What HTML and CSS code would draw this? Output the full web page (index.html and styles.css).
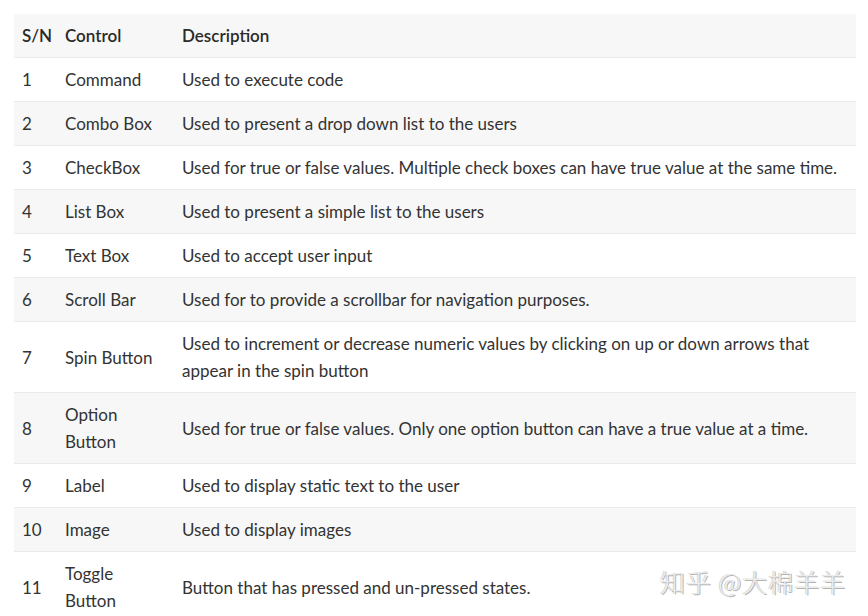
FILE: index.html
```html
<!DOCTYPE html>
<html>
<head>
<meta charset="utf-8">
<link rel="stylesheet" href="styles.css">
</head>
<body>
<div class="page">
<table class="ctl">
<thead>
<tr><th class="c1">S/N</th><th class="c2">Control</th><th class="c3">Description</th></tr>
</thead>
<tbody>
<tr><td>1</td><td>Command</td><td>Used to execute code</td></tr>
<tr><td>2</td><td>Combo Box</td><td>Used to present a drop down list to the users</td></tr>
<tr><td>3</td><td>CheckBox</td><td>Used for true or false values. Multiple check boxes can have true value at the same time.</td></tr>
<tr><td>4</td><td>List Box</td><td>Used to present a simple list to the users</td></tr>
<tr><td>5</td><td>Text Box</td><td>Used to accept user input</td></tr>
<tr><td>6</td><td>Scroll Bar</td><td>Used for to provide a scrollbar for navigation purposes.</td></tr>
<tr><td>7</td><td>Spin Button</td><td>Used to increment or decrease numeric values by clicking on up or down arrows that appear in the spin button</td></tr>
<tr><td>8</td><td>Option Button</td><td>Used for true or false values. Only one option button can have a true value at a time.</td></tr>
<tr><td>9</td><td>Label</td><td>Used to display static text to the user</td></tr>
<tr><td>10</td><td>Image</td><td>Used to display images</td></tr>
<tr><td>11</td><td>Toggle Button</td><td>Button that has pressed and un-pressed states.</td></tr>
</tbody>
</table>
<div class="mark">知乎 @大棉羊羊</div>
</div>
</body>
</html>
```
FILE: styles.css
```css
html, body { margin: 0; padding: 0; background: #fff; }
body { overflow: hidden; }
.page { position: relative; padding: 14px 12px 0 14px; width: 842px; height: 602px; }
.ctl {
  border-collapse: collapse;
  width: 842px;
  font-family: Lato, "Open Sans", sans-serif;
  font-size: 17px;
  line-height: 27px;
  color: #333;
  table-layout: fixed;
}
.ctl th, .ctl td {
  padding: 8px 8px 8px 8px;
  text-align: left;
  vertical-align: middle;
}
.ctl th { font-weight: 600; color: #2a2a2a; }
.ctl thead tr { background: #f7f7f7; }
.ctl tbody tr { border-top: 1px solid #ebebeb; }
.ctl tbody tr:nth-child(even) { background: #f7f7f7; }
.c1 { width: 27px; }
.c2 { width: 101px; }
.mark {
  position: absolute;
  left: 660px;
  top: 563px;
  font-family: "Noto Sans CJK SC", sans-serif;
  font-weight: 300;
  font-size: 25px;
  color: #ececec;
  text-shadow: 1px 1px 0 #b4b4b4, -1px 0 0 #d6d6d6;
  letter-spacing: 1px;
}
```
